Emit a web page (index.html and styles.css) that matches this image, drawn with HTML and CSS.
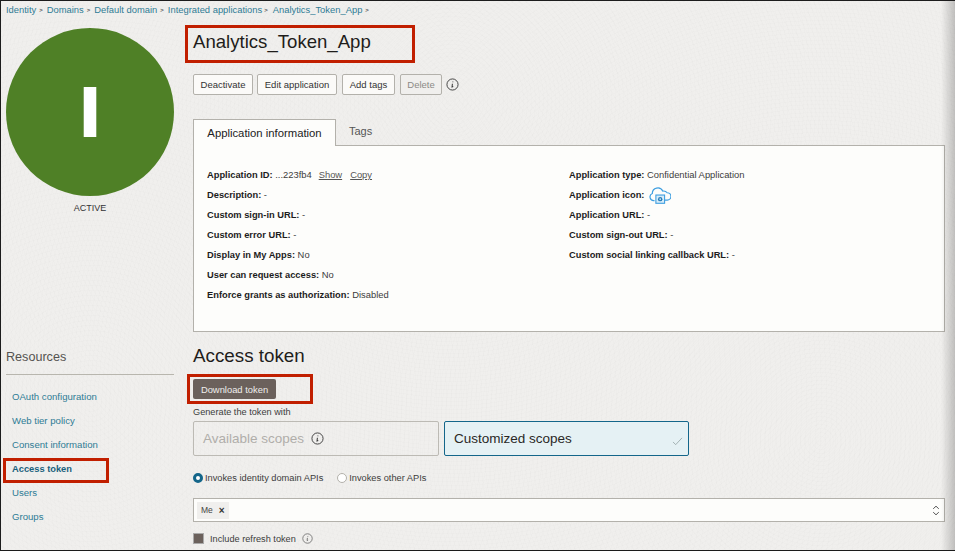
FILE: index.html
```html
<!DOCTYPE html>
<html lang="en">
<head>
<meta charset="utf-8">
<title>Analytics_Token_App</title>
<link rel="stylesheet" href="styles.css">
</head>
<body>
<div class="frame">
  <nav class="crumbs">
    <a>Identity</a><span class="sep">&gt;</span>
    <a>Domains</a><span class="sep">&gt;</span>
    <a>Default domain</a><span class="sep">&gt;</span>
    <a>Integrated applications</a><span class="sep tight">&gt;</span>
    <a>Analytics_Token_App</a><span class="sep">&gt;</span>
  </nav>
  <div class="content">
    <aside class="side">
      <div class="avatar"><span class="initial">I</span></div>
      <div class="status">ACTIVE</div>
      <h2 class="res-title">Resources</h2>
      <ul class="res-list">
        <li>OAuth configuration</li>
        <li>Web tier policy</li>
        <li>Consent information</li>
        <li class="current">Access token</li>
        <li>Users</li>
        <li>Groups</li>
      </ul>
    </aside>
    <main class="main">
      <h1 class="title">Analytics_Token_App</h1>
      <div class="actions">
        <button class="btn b1">Deactivate</button>
        <button class="btn b2">Edit application</button>
        <button class="btn b3">Add tags</button>
        <button class="btn b4 disabled">Delete</button>
        <svg class="info" viewBox="0 0 14 14"><circle cx="7" cy="7" r="6" fill="none" stroke="#3a3a3a" stroke-width="1"/><path d="M7.400 3.800v.9M6.900 6.200 6.500 9.600l1.300-.5" fill="none" stroke="#3a3a3a" stroke-width="1.100"/></svg>
      </div>
      <div class="tabs">
        <div class="tab active">Application information</div>
        <div class="tab">Tags</div>
      </div>
      <section class="panel">
        <div class="col col-left">
          <p><b>Application ID:</b> ...223fb4<a class="lnk first">Show</a><a class="lnk">Copy</a></p>
          <p><b>Description:</b> -</p>
          <p><b>Custom sign-in URL:</b> -</p>
          <p><b>Custom error URL:</b> -</p>
          <p><b>Display in My Apps:</b> No</p>
          <p><b>User can request access:</b> No</p>
          <p><b>Enforce grants as authorization:</b> Disabled</p>
        </div>
        <div class="col">
          <p><b>Application type:</b> Confidential Application</p>
          <p class="with-icon"><b>Application icon:</b>
            <svg class="cloud" viewBox="0 0 24 20"><path d="M6 15.500H5A4 4 0 0 1 3.600 7.800 6 6 0 0 1 15 5.200a4.800 4.800 0 0 1 4.800 1.800A4 4 0 0 1 20 15H17" fill="none" stroke="#3f9fe0" stroke-width="1.300"/><rect x="7.500" y="9.500" width="9.500" height="9" fill="#d8ecf8" stroke="#3f9fe0" stroke-width="1.200"/><circle cx="12.200" cy="14" r="2.400" fill="#2a7fb8"/><circle cx="12.200" cy="14" r=".9" fill="#d8ecf8"/></svg>
          </p>
          <p><b>Application URL:</b> -</p>
          <p><b>Custom sign-out URL:</b> -</p>
          <p><b>Custom social linking callback URL:</b> -</p>
        </div>
      </section>
      <h2 class="sub">Access token</h2>
      <button class="btn-dark">Download token</button>
      <div class="gen-label">Generate the token with</div>
      <div class="cards">
        <div class="card off">Available scopes
          <svg class="info-lg" viewBox="0 0 14 14"><circle cx="7" cy="7" r="6" fill="none" stroke="#3a3a3a" stroke-width="1"/><path d="M7.400 3.800v.9M6.900 6.200 6.500 9.600l1.300-.5" fill="none" stroke="#3a3a3a" stroke-width="1.100"/></svg>
        </div>
        <div class="card on">Customized scopes
          <svg class="check" viewBox="0 0 12 10"><path d="M1 5.500 4 8.500 11 1" fill="none" stroke="#8a9a9a" stroke-width=".8"/></svg>
        </div>
      </div>
      <div class="radios">
        <span class="radio sel"></span><span class="r-label">Invokes identity domain APIs</span>
        <span class="radio"></span><span class="r-label">Invokes other APIs</span>
      </div>
      <div class="select">
        <span class="chip">Me<span class="chip-x">×</span></span>
        <svg class="updown" viewBox="0 0 8 13"><path d="M1.200 4.800 4 2.200l2.800 2.600M1.200 8.200 4 10.800l2.800-2.600" fill="none" stroke="#444" stroke-width=".9"/></svg>
      </div>
      <div class="refresh">
        <span class="box"></span><span class="r-text">Include refresh token</span>
        <svg class="info-sm" viewBox="0 0 14 14"><circle cx="7" cy="7" r="6" fill="none" stroke="#666" stroke-width="1"/><path d="M7.400 3.800v.9M6.900 6.200 6.500 9.600l1.300-.5" fill="none" stroke="#666" stroke-width="1.100"/></svg>
      </div>
    </main>
  </div>
  <div class="mark mark-title"></div>
  <div class="mark mark-download"></div>
  <div class="mark mark-nav"></div>
  <div class="edge"></div>
</div>
</body>
</html>
```
FILE: styles.css
```css
* { box-sizing: border-box; }
html, body { margin: 0; padding: 0; }
body { background: #f0efed; font-family: "Liberation Sans", Arial, sans-serif; }

.frame {
  position: relative;
  width: 955px;
  height: 551px;
  overflow: hidden;
  border-top: 1px solid #1c1c1c;
  border-left: 1px solid #1c1c1c;
  border-bottom: 1px solid #1c1c1c;
  color: #1f1d1b;
  background-color: #f0efed;
  background-image:
    repeating-radial-gradient(circle at 820px 440px, rgba(0,0,0,.008) 0 1px, transparent 1px 4px),
    repeating-radial-gradient(circle at 90px 400px, rgba(0,0,0,.008) 0 1px, transparent 1px 5px),
    repeating-radial-gradient(circle at 450px 100px, rgba(0,0,0,.008) 0 1px, transparent 1px 4px);
}

.crumbs {
  display: flex;
  align-items: center;
  height: 17px;
  padding: 0 0 0 5px;
  font-size: 9.4px;
  color: #2f7c95;
}
.sep { font-size: 6px; font-weight: bold; color: #555; margin: 0 4px 0 3px; }
.sep.tight { margin-left: 2px; margin-right: 5px; }

.content {
  display: grid;
  grid-template-columns: 168px 752px;
  column-gap: 19px;
  padding-left: 5px;
}

.side { display: flex; flex-direction: column; }
.avatar {
  width: 168px;
  height: 168px;
  margin-top: 10px;
  border-radius: 50%;
  background: #4f8026;
  color: #fff;
  display: flex;
  align-items: center;
  justify-content: center;
  font-size: 72px;
  font-weight: bold;
  line-height: 1;
}
.initial { display: inline-block; transform: scaleX(1.2); }
.status { margin-top: 7px; font-size: 9px; text-align: center; line-height: 11px; color: #333; }
.res-title {
  margin: 134px 0 0;
  padding-bottom: 9px;
  height: 27px;
  font-size: 12.6px;
  font-weight: normal;
  line-height: 18px;
  color: #555350;
  border-bottom: 1px solid #b8b6ae;
}
.res-list { list-style: none; margin: 10px 0 0; padding: 0; }
.res-list li {
  height: 24px;
  line-height: 24px;
  padding-left: 6px;
  font-size: 9.6px;
  color: #2f7c95;
}
.res-list li.current { font-size: 9.3px; font-weight: bold; color: #19607c; }

.main { display: flex; flex-direction: column; align-items: flex-start; }
.title { margin: 5px 0 0; font-size: 18.6px; font-weight: normal; line-height: 38px; height: 38px; }
.actions { display: flex; align-items: center; margin-top: 12px; height: 22px; }
.btn {
  height: 21px;
  padding: 0;
  font: 9.5px "Liberation Sans", Arial, sans-serif;
  color: #333;
  background: #fbfaf8;
  border: 1px solid #b3b1ab;
  border-radius: 2px;
}
.b1 { width: 60px; margin-right: 4px; }
.b2 { width: 80px; margin-right: 5px; }
.b3 { width: 53px; margin-right: 5px; }
.b4 { width: 42px; margin-right: 4px; }
.btn.disabled { color: #8c8a86; background: #f0efed; }
.info { width: 13px; height: 13px; }

.tabs { display: flex; margin-top: 24px; height: 27px; }
.tab { padding: 0 13px; line-height: 25px; font-size: 11px; color: #555; }
.tab.active {
  width: 143px;
  padding: 0;
  text-align: center;
  font-size: 11.3px;
  line-height: 27px;
  color: #222;
  background: #fdfdfb;
  border: 1px solid #b3b1ab;
  border-bottom: 0;
  position: relative;
  z-index: 1;
}
.panel {
  display: grid;
  grid-template-columns: 362px 1fr;
  width: 752px;
  height: 187px;
  margin-top: -1px;
  padding: 19px 13px 0;
  background: #fdfdfb;
  border: 1px solid #b3b1ab;
}
.col p { margin: 0; height: 20px; line-height: 20px; font-size: 9.4px; color: #3c3c3c; white-space: nowrap; }
.col b { color: #1c1c1c; font-size: 9.3px; }
.lnk { color: #555; text-decoration: underline; margin-left: 8px; }
.lnk.first { margin-left: 7px; }
.with-icon { display: flex; align-items: center; gap: 5px; }
.cloud { width: 22px; height: 19px; }

.sub { margin: 12px 0 0; font-size: 18.8px; font-weight: normal; line-height: 24px; height: 24px; }
.btn-dark {
  height: 20px;
  width: 83px;
  margin-top: 11px;
  padding: 0;
  font: 9.4px "Liberation Sans", Arial, sans-serif;
  color: #efeeec;
  background: #6b615c;
  border: 0;
  border-radius: 2px;
}
.gen-label { margin-top: 8px; height: 11px; font-size: 9.2px; line-height: 11px; color: #3c3c3c; }
.cards { display: flex; gap: 5px; margin-top: 3px; }
.card {
  position: relative;
  display: flex;
  align-items: center;
  width: 246px;
  height: 35px;
  padding-left: 9px;
  font-size: 13.5px;
  border-radius: 2px;
}
.card.off { color: #b0aeaa; border: 1px solid #bcbab4; }
.card.on { width: 245px; color: #2a2826; background: #e5f1f4; border: 1px solid #14668a; }
.info-lg { width: 13px; height: 13px; margin-left: 7px; }
.check { position: absolute; right: 5px; bottom: 9px; width: 11px; height: 9px; }

.radios { display: flex; align-items: center; margin-top: 15px; height: 14px; font-size: 9.25px; color: #3c3c3c; }
.radio { width: 10px; height: 10px; margin-right: 2px; border-radius: 50%; background: #fff; border: 1px solid #b3b1ab; }
.radio.sel { background: #fff; border: 3px solid #14668a; }
.r-label { margin-right: 14px; }

.select {
  display: flex;
  align-items: center;
  justify-content: space-between;
  width: 752px;
  height: 24px;
  margin-top: 13px;
  padding: 0 4px 0 3px;
  background: #fdfdfb;
  border: 1px solid #b3b1ab;
}
.chip { display: flex; align-items: center; width: 32px; height: 17px; padding-left: 4px; font-size: 8.5px; color: #444; background: #f0efed; }
.chip-x { margin-left: 6px; font-size: 10px; font-weight: bold; color: #333; }
.updown { width: 8px; height: 13px; }

.refresh { display: flex; align-items: center; margin-top: 10px; height: 13px; font-size: 9.2px; color: #3c3c3c; }
.box { width: 11px; height: 11px; background: #6b615c; border: 1px solid #aaa; margin-right: 6px; }
.info-sm { width: 11px; height: 11px; margin-left: 6px; }

.mark { position: absolute; border: 3px solid #c11f00; pointer-events: none; }
.mark-title { left: 184px; top: 24px; width: 230px; height: 38px; }
.mark-download { left: 186px; top: 373px; width: 126px; height: 30px; }
.mark-nav { left: 2px; top: 457px; width: 106px; height: 25px; }

.edge {
  position: absolute;
  top: 0;
  right: 0;
  bottom: 0;
  width: 14px;
  background: linear-gradient(to right, rgba(0,0,0,0), rgba(0,0,0,.2));
  pointer-events: none;
}
```
